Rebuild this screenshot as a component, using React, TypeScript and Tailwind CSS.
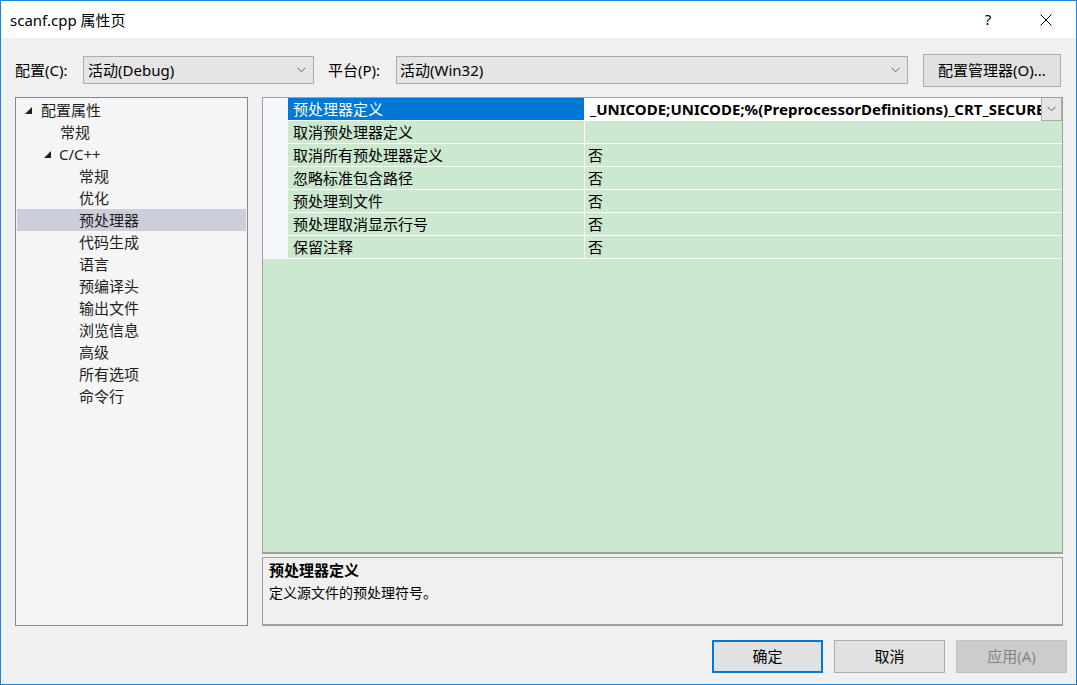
import React from "react";

const FONT = { fontFamily: '"Segoe UI", "Noto Sans", "Noto Sans CJK SC", sans-serif' };

function Chevron({ className = "" }: { className?: string }) {
  return (
    <svg width="9" height="6" viewBox="0 0 9 6" className={className}>
      <polyline points="0.5,0.8 4.5,4.8 8.5,0.8" fill="none" stroke="#606060" strokeWidth="1" />
    </svg>
  );
}

function Tri() {
  return (
    <svg width="7" height="7" viewBox="0 0 7 7" className="shrink-0">
      <polygon points="7,0 7,7 0,7" fill="#1e1e1e" />
    </svg>
  );
}

type TreeItem = { label: string; indent: number; tri?: boolean; selected?: boolean };

const tree: TreeItem[] = [
  { label: "配置属性", indent: 0, tri: true },
  { label: "常规", indent: 1 },
  { label: "C/C++", indent: 1, tri: true },
  { label: "常规", indent: 2 },
  { label: "优化", indent: 2 },
  { label: "预处理器", indent: 2, selected: true },
  { label: "代码生成", indent: 2 },
  { label: "语言", indent: 2 },
  { label: "预编译头", indent: 2 },
  { label: "输出文件", indent: 2 },
  { label: "浏览信息", indent: 2 },
  { label: "高级", indent: 2 },
  { label: "所有选项", indent: 2 },
  { label: "命令行", indent: 2 },
];

const props: { name: string; value: string }[] = [
  { name: "取消预处理器定义", value: "" },
  { name: "取消所有预处理器定义", value: "否" },
  { name: "忽略标准包含路径", value: "否" },
  { name: "预处理到文件", value: "否" },
  { name: "预处理取消显示行号", value: "否" },
  { name: "保留注释", value: "否" },
];

function TreeRow({ item }: { item: TreeItem }) {
  const padMap: Record<number, string> = { 0: "pl-[8px]", 1: "pl-[27px]", 2: "pl-[62px]" };
  const pad = padMap[item.indent];
  return (
    <div
      className={`h-[22px] mx-[1px] flex items-center text-[15px] leading-[22px] text-[#1e1e1e] ${
        item.selected ? "bg-[#cccedb]" : ""
      } ${pad}`}
    >
      {item.tri ? (
        <div className="flex items-center">
          <Tri />
          <span className={item.indent === 0 ? "ml-[9px]" : "ml-[8px]"}>{item.label}</span>
        </div>
      ) : (
        <span className={item.indent === 1 ? "ml-[16px]" : ""}>{item.label}</span>
      )}
    </div>
  );
}

export default function App() {
  return (
    <div
      className="w-[1077px] h-[685px] border border-[#1883d7] bg-[#f0f0f0] flex flex-col overflow-hidden text-black"
      style={FONT}
    >
      {/* Title bar */}
      <div className="h-[37px] bg-white flex items-center justify-between pl-[9px] shrink-0">
        <span className="text-[15px] leading-[20px] text-black">scanf.cpp 属性页</span>
        <div className="flex items-center h-full">
          <span className="text-[15px] text-black w-[58px] text-center">?</span>
          <div className="w-[58px] flex items-center justify-center mr-[1px]">
            <svg width="12" height="12" viewBox="0 0 12 12">
              <line x1="0.5" y1="0.5" x2="11.5" y2="11.5" stroke="#000" strokeWidth="1" />
              <line x1="11.5" y1="0.5" x2="0.5" y2="11.5" stroke="#000" strokeWidth="1" />
            </svg>
          </div>
        </div>
      </div>

      {/* Configuration row */}
      <div className="mt-[18px] h-[28px] flex items-center pl-[14px] shrink-0">
        <span className="w-[68px] text-[15px] leading-[20px]">配置(C):</span>
        <div className="w-[231px] h-[28px] bg-[#e5e5e5] border border-[#acacac] flex items-center justify-between pl-[4px] pr-[7px]">
          <span className="text-[15px] leading-[20px]">活动(Debug)</span>
          <Chevron />
        </div>
        <span className="ml-[14px] w-[68px] text-[15px] leading-[20px]">平台(P):</span>
        <div className="w-[512px] h-[28px] bg-[#e5e5e5] border border-[#acacac] flex items-center justify-between pl-[3px] pr-[7px]">
          <span className="text-[15px] leading-[20px]">活动(Win32)</span>
          <Chevron />
        </div>
        <div className="ml-[15px] w-[138px] h-[33px] bg-[#e1e1e1] border border-[#adadad] flex items-center justify-center">
          <span className="text-[15px] leading-[20px]">配置管理器(O)...</span>
        </div>
      </div>

      {/* Main area */}
      <div className="mt-[13px] flex pl-[14px] shrink-0">
        {/* Tree */}
        <div className="w-[233px] h-[529px] bg-[#f5f5f5] border border-[#828790] pt-[1px]">
          {tree.map((t, i) => (
            <TreeRow key={i} item={t} />
          ))}
        </div>

        {/* Right column */}
        <div className="ml-[14px] w-[801px] flex flex-col">
          {/* Property grid */}
          <div className="h-[457px] border border-[#a0a0a0] border-b-2 border-b-[#a0a0a0] bg-[#cce8cf] flex flex-col overflow-hidden">
            <div className="flex">
              <div className="w-[25px] bg-[#f4f7fb] shrink-0" />
              <div className="flex-1 min-w-0 flex flex-col">
                {/* Selected row */}
                <div className="h-[23px] flex border-b border-white">
                  <div className="w-[297px] bg-[#0078d7] text-white text-[15px] leading-[22px] pl-[5px] border-r border-white shrink-0">
                    预处理器定义
                  </div>
                  <div className="flex-1 flex bg-white min-w-0">
                    <div className="flex-1 min-w-0 overflow-hidden whitespace-nowrap text-[15px] leading-[22px] font-bold pl-[5px]">
                      _UNICODE;UNICODE;%(PreprocessorDefinitions)_CRT_SECURE_NO_WARNINGS
                    </div>
                    <div className="w-[21px] h-[24px] -mt-[1px] bg-[#e5e5e5] border border-[#acacac] flex items-center justify-center shrink-0">
                      <Chevron />
                    </div>
                  </div>
                </div>
                {props.map((p, i) => (
                  <div key={i} className="h-[23px] flex border-b border-white">
                    <div className="w-[297px] text-[15px] leading-[22px] pl-[5px] border-r border-white shrink-0">
                      {p.name}
                    </div>
                    <div className="flex-1 text-[15px] leading-[22px] pl-[3px]">{p.value}</div>
                  </div>
                ))}
              </div>
            </div>
          </div>

          {/* Description */}
          <div className="mt-[3px] h-[69px] border border-[#a0a0a0] border-b-2 bg-[#f0f0f0] pl-[6px] pt-[1px]">
            <div className="text-[15px] leading-[22px] font-bold">预处理器定义</div>
            <div className="text-[14px] leading-[23px]">定义源文件的预处理符号。</div>
          </div>
        </div>
      </div>

      {/* Footer buttons */}
      <div className="mt-[14px] flex justify-end pr-[9px] gap-[11px] shrink-0">
        <div className="w-[111px] h-[33px] bg-[#e1e1e1] border-2 border-[#0078d7] flex items-center justify-center text-[15px]">
          确定
        </div>
        <div className="w-[111px] h-[33px] bg-[#e1e1e1] border border-[#adadad] flex items-center justify-center text-[15px]">
          取消
        </div>
        <div className="w-[111px] h-[33px] bg-[#cccccc] border border-[#bfbfbf] flex items-center justify-center text-[15px] text-[#838383]">
          应用(A)
        </div>
      </div>
    </div>
  );
}
